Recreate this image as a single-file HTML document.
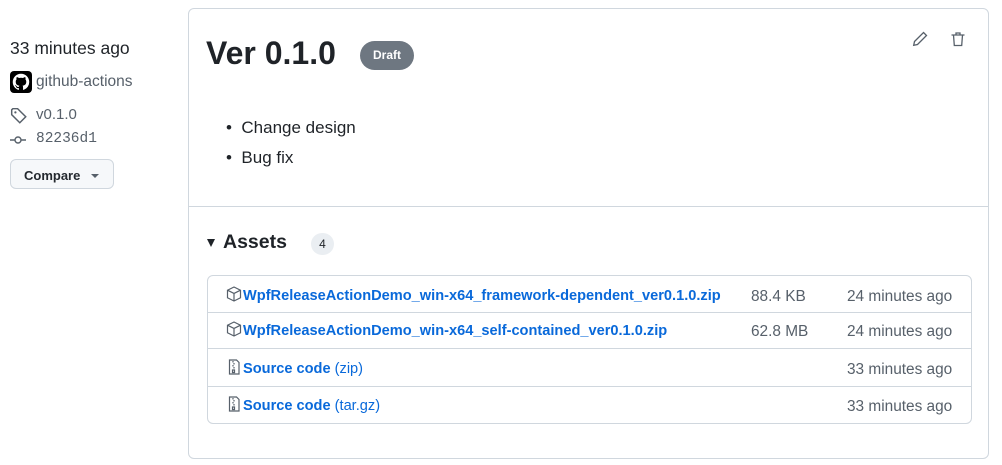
<!DOCTYPE html>
<html><head><meta charset="utf-8"><style>
body{margin:0;width:1002px;height:465px;background:#fff;font-family:"Liberation Sans",sans-serif;color:#1f2328;position:relative;overflow:hidden}
.a{position:absolute;white-space:nowrap}
.card{position:absolute;left:188px;top:8px;width:801px;height:451px;border:1px solid #d0d7de;border-radius:6px;box-sizing:border-box}
.box{position:absolute;left:207px;top:275px;width:765px;height:149px;border:1px solid #d0d7de;border-radius:6px;box-sizing:border-box}
.row{position:absolute;left:0;right:0;border-top:1px solid #d0d7de}
.lnk{color:#0969da;font-size:14.6px;font-weight:bold}
.mut{color:#57606a;font-size:15.4px}
</style></head><body>
<div class="a" style="left:10px;top:38px;font-size:17.5px">33 minutes ago</div>
<div class="a" style="left:10px;top:71px;width:22px;height:22px;background:#000;border-radius:4px">
<svg width="22" height="22" viewBox="0 0 16 16"><path fill="#fff" transform="translate(2 2) scale(.75)" d="M8 0C3.580 0 0 3.58 0 8c0 3.54 2.29 6.53 5.47 7.590.4.07.55-.17.55-.38v-1.33c-2.23.48-2.7-1.07-2.7-1.07-.36-.92-.89-1.170-.89-1.17-.73-.5.05-.49.05-.49.8.06 1.23.83 1.23.83.72 1.22 1.870.87 2.33.66.07-.52.28-.87.5-1.07-1.78-.2-3.64-.89-3.64-3.95 0-.87.31-1.59.82-2.15-.08-.2-.36-1.02.08-2.12 0 0 .67-.21 2.2.82.64-.18 1.32-.27 2-.27.68 0 1.36.09 2 .27 1.53-1.04 2.2-.82 2.2-.82.44 1.1.16 1.92.08 2.12.51.56.82 1.27.82 2.15 0 3.07-1.87 3.75-3.65 3.95.29.25.54.73.54 1.48v2.2c0 .21.15.46.55.38A8.013 8.013 0 0016 8c0-4.420-3.58-8-8-8z"/></svg></div>
<div class="a" style="left:36px;top:73px;font-size:15.5px;color:#57606a">github-actions</div>
<svg class="a" style="left:10px;top:107px" width="18" height="18" viewBox="0 0 16 16"><path fill="none" stroke="#57606a" stroke-width="1.3" d="M1.5 2.5v4.3l7.2 7.2 5.3-5.3-7.2-7.2H2.5z"/><circle cx="4.8" cy="4.8" r="1" fill="#57606a"/></svg>
<div class="a" style="left:36px;top:106px;font-size:15px;color:#57606a">v0.1.0</div>
<svg class="a" style="left:10px;top:132px" width="16" height="16" viewBox="0 0 16 16"><circle cx="8" cy="8" r="3" fill="none" stroke="#57606a" stroke-width="1.4"/><path stroke="#57606a" stroke-width="1.4" d="M0 8h5M11 8h5"/></svg>
<div class="a" style="left:36px;top:131px;font-size:14.5px;color:#57606a;font-family:'Liberation Mono',monospace">82236d1</div>
<div class="a" style="left:10px;top:159px;width:104px;height:30px;border:1px solid #d0d7de;border-radius:6px;background:#f6f8fa;box-sizing:border-box"></div>
<div class="a" style="left:24px;top:168px;font-size:13px;font-weight:bold;color:#24292f">Compare</div>
<div class="a" style="left:91px;top:174px;border-left:4px solid transparent;border-right:4px solid transparent;border-top:4px solid #57606a"></div>

<div class="card"></div>
<div class="a" style="left:206px;top:35px;font-size:32px;font-weight:bold">Ver 0.1.0</div>
<div class="a" style="left:360px;top:41px;width:54px;height:29px;border-radius:15px;background:#6e7781;color:#fff;font-size:12px;font-weight:bold;text-align:center;line-height:29px">Draft</div>
<svg class="a" style="left:912px;top:31px" width="16" height="16" viewBox="0 0 16 16"><path fill="none" stroke="#57606a" stroke-width="1.3" d="M11.5 1.5l3 3-9 9-3.8.8.8-3.8z"/></svg>
<svg class="a" style="left:950px;top:31px" width="16" height="16" viewBox="0 0 16 16"><path fill="none" stroke="#57606a" stroke-width="1.3" d="M1.5 4h13M6 4V2h4v2M3.5 4l.8 10.5h7.4l.8-10.5"/></svg>
<div class="a" style="left:226px;top:118px;font-size:17px;line-height:20px">•&nbsp;&nbsp;Change design</div>
<div class="a" style="left:226px;top:148px;font-size:17px;line-height:20px">•&nbsp;&nbsp;Bug fix</div>
<div class="a" style="left:189px;top:206px;width:799px;height:1px;background:#d0d7de"></div>
<div class="a" style="left:207px;top:239px;border-left:4px solid transparent;border-right:4px solid transparent;border-top:8px solid #1f2328"></div>
<div class="a" style="left:223px;top:231px;font-size:19.5px;font-weight:bold">Assets</div>
<div class="a" style="left:311px;top:233px;width:23px;height:22px;border-radius:11px;background:#eaeef2;font-size:12px;text-align:center;line-height:22px">4</div>

<div class="box">
<div class="row" style="top:36px"></div><div class="row" style="top:72px"></div><div class="row" style="top:110px"></div>
</div>
<svg class="a" style="left:226px;top:286px" width="16" height="16" viewBox="0 0 16 16"><path fill="none" stroke="#57606a" stroke-width="1.2" d="M8 1l6.5 3.2v7.6L8 15l-6.5-3.2V4.2zM1.5 4.2L8 7.4l6.5-3.2M8 7.4V15"/></svg>
<div class="a lnk" style="left:243px;top:288px">WpfReleaseActionDemo_win-x64_framework-dependent_ver0.1.0.zip</div>
<div class="a mut" style="left:751px;top:288px">88.4 KB</div>
<div class="a mut" style="left:847px;top:288px">24 minutes ago</div>
<svg class="a" style="left:226px;top:321px" width="16" height="16" viewBox="0 0 16 16"><path fill="none" stroke="#57606a" stroke-width="1.2" d="M8 1l6.5 3.2v7.6L8 15l-6.5-3.2V4.2zM1.5 4.2L8 7.4l6.5-3.2M8 7.4V15"/></svg>
<div class="a lnk" style="left:243px;top:323px">WpfReleaseActionDemo_win-x64_self-contained_ver0.1.0.zip</div>
<div class="a mut" style="left:751px;top:323px">62.8 MB</div>
<div class="a mut" style="left:847px;top:323px">24 minutes ago</div>
<svg class="a" style="left:226px;top:359px" width="16" height="16" viewBox="0 0 16 16"><path fill="none" stroke="#57606a" stroke-width="1.2" d="M3.5 1h7l2.5 2.5v11.5H3.5zM7 2v1.5M8 4v1.5M7 6v1.5M8 8v1.5M6.5 11h2v2.5h-2z"/></svg>
<div class="a" style="left:243px;top:361px;font-size:14.6px"><span class="lnk">Source code</span> <span style="color:#0969da">(zip)</span></div>
<div class="a mut" style="left:847px;top:361px">33 minutes ago</div>
<svg class="a" style="left:226px;top:396px" width="16" height="16" viewBox="0 0 16 16"><path fill="none" stroke="#57606a" stroke-width="1.2" d="M3.5 1h7l2.5 2.5v11.5H3.5zM7 2v1.5M8 4v1.5M7 6v1.5M8 8v1.5M6.5 11h2v2.5h-2z"/></svg>
<div class="a" style="left:243px;top:398px;font-size:14.6px"><span class="lnk">Source code</span> <span style="color:#0969da">(tar.gz)</span></div>
<div class="a mut" style="left:847px;top:398px">33 minutes ago</div>
</body></html>
